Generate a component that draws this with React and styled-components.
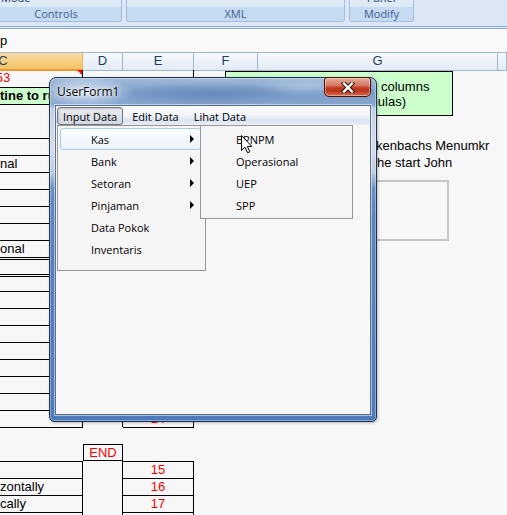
import React from "react";
import styled, { createGlobalStyle } from "styled-components";

const GlobalStyle = createGlobalStyle`
    html, body {
        margin: 0;
        padding: 0;
        background: #f7f7f7;
        overflow: hidden;
    }
`;

const RED = "#ff0000";
const GREEN = "#ccffcc";
const TEMPLATE = "159px 40px 71px 64px 240px 1fr";
const COLS = ["C", "D", "E", "F", "G", "H"];

const Page = styled.div`
    position: relative;
    width: 507px;
    height: 515px;
    overflow: hidden;
    display: flex;
    flex-direction: column;
    background: #f7f7f7;
    font-family: "Liberation Sans", Arial, sans-serif;
`;

/* ---------- ribbon ---------- */

const Ribbon = styled.div`
    display: flex;
    align-items: flex-start;
    gap: 4px;
    height: 26px;
    flex-shrink: 0;
    background: #dbe7f5;
    border-bottom: 3px double #93acd0;
`;

const Group = styled.div`
    display: flex;
    flex-direction: column;
    box-sizing: border-box;
    width: ${(p) => p.$w}px;
    height: 22px;
    margin-left: ${(p) => p.$offset || 0}px;
    border: 1px solid #a5bedf;
    border-top: none;
    border-radius: 0 0 3px 3px;
    background: #dfeaf7;
    overflow: hidden;
`;

const GroupBody = styled.div`
    height: 7px;
    overflow: hidden;
    padding-left: ${(p) => p.$pad || 0}px;
    font-family: "Open Sans", sans-serif;
    font-size: 11px;
    color: #1e395b;
`;

const ClippedText = styled.div`
    line-height: 12px;
    margin-top: -8px;
    white-space: nowrap;
`;

const GroupLabel = styled.div`
    height: 14px;
    line-height: 14px;
    text-align: center;
    background: #c6daf1;
    font-family: "Open Sans", sans-serif;
    font-size: 11px;
    color: #3e5f92;
`;

/* ---------- formula bar + headers ---------- */

const FormulaBar = styled.div`
    height: 23px;
    flex-shrink: 0;
    line-height: 23px;
    font-size: 13px;
    color: #000;
    background: #f9f9f9;
    border-bottom: 1px solid #9fb6d3;
`;

const HeaderRow = styled.div`
    display: grid;
    grid-template-columns: ${TEMPLATE};
    height: 17px;
    flex-shrink: 0;
    margin-left: -76px;
`;

const HeaderCell = styled.div`
    box-sizing: border-box;
    border-right: 1px solid ${(p) => (p.$selected ? "#f2b35c" : "#9eb6ce")};
    border-bottom: ${(p) => (p.$selected ? "2px solid #f29536" : "1px solid #9eb6ce")};
    background: ${(p) =>
        p.$selected
            ? "linear-gradient(#f9dca4, #f3c465)"
            : "linear-gradient(#f6f9fd, #e3ebf6)"};
    text-align: center;
    font-size: 13px;
    line-height: 16px;
    color: #1f3c62;
`;

/* ---------- sheet ---------- */

const SheetGrid = styled.div`
    display: grid;
    grid-template-columns: ${TEMPLATE};
    grid-auto-rows: 17px;
    margin-left: -76px;
`;

const line = (v) => (v === "double" ? "3px double #000" : v ? "1px solid #000" : "none");

const Cell = styled.div`
    position: relative;
    box-sizing: border-box;
    border-top: ${(p) => line(p.$t)};
    border-bottom: ${(p) => line(p.$b)};
    border-left: ${(p) => line(p.$l)};
    border-right: ${(p) => line(p.$r)};
    background: ${(p) => p.$bg || "transparent"};
    color: ${(p) => p.$color || "#000"};
    font-weight: ${(p) => (p.$bold ? 700 : 400)};
    text-align: ${(p) => p.$align || "left"};
    padding-left: ${(p) => p.$pad || 0}px;
    font-size: 13px;
    line-height: 15px;
    white-space: nowrap;

    ${(p) =>
        p.$comment &&
        `&::after {
            content: "";
            position: absolute;
            top: 0;
            right: 0;
            border-top: 5px solid ${RED};
            border-left: 5px solid transparent;
        }`}
`;

const GreenNote = styled.div`
    position: absolute;
    left: 225px;
    top: 71px;
    width: 228px;
    height: 45px;
    box-sizing: border-box;
    border: 1px solid #000;
    background: ${GREEN};
    padding-top: 7px;
    font-size: 13px;
    line-height: 15px;
    white-space: nowrap;
`;

const NoteLine = styled.div`
    padding-left: ${(p) => p.$pad}px;
`;

const GrayShape = styled.div`
    position: absolute;
    left: 370px;
    top: 180px;
    width: 79px;
    height: 61px;
    box-sizing: border-box;
    border: 2px solid #c6c6c6;
`;

/* ---------- user form ---------- */

const Window = styled.div`
    position: absolute;
    left: 49px;
    top: 77px;
    width: 328px;
    height: 345px;
    box-sizing: border-box;
    display: flex;
    flex-direction: column;
    padding: 0 5px 6px;
    border: 1px solid #1f3350;
    border-radius: 7px 7px 5px 5px;
    background: linear-gradient(
        180deg,
        #a2bbdb 0px,
        #7c9dc9 14px,
        #86a5cf 27px,
        #c2d1e4 30px,
        #d3dde9 70px,
        #b9cbe1 95px,
        #6990c6 110px,
        #5783c1 140px,
        #4c7abb 100%
    );
    box-shadow: inset 0 0 0 1px rgba(255, 255, 255, 0.35), 1px 1px 3px rgba(0, 0, 0, 0.25);
`;

const TitleBar = styled.div`
    display: flex;
    justify-content: space-between;
    align-items: flex-start;
    height: 27px;
    flex-shrink: 0;
    margin: 0 -5px;
    padding: 0 5px;
    border-radius: 6px 6px 0 0;
    background:
        radial-gradient(ellipse 50px 16px at 35px 14px, rgba(228, 236, 246, 0.9), rgba(228, 236, 246, 0)),
        radial-gradient(ellipse 90px 12px at 160px 16px, rgba(60, 100, 160, 0.35), rgba(60, 100, 160, 0)),
        radial-gradient(ellipse 50px 10px at 255px 8px, rgba(200, 215, 235, 0.5), rgba(200, 215, 235, 0));
`;

const Title = styled.div`
    align-self: center;
    padding-left: 2px;
    font-family: "Open Sans", sans-serif;
    font-size: 12px;
    color: #000;
    text-shadow: 0 0 6px rgba(255, 255, 255, 0.95), 0 0 2px #fff;
`;

const CloseButton = styled.div`
    display: flex;
    align-items: center;
    justify-content: center;
    box-sizing: border-box;
    width: 47px;
    height: 20px;
    margin-top: -1px;
    border: 1px solid #4a1109;
    border-radius: 3px 3px 5px 5px;
    background: linear-gradient(
        180deg,
        #e9ab9b 0%,
        #d57a66 40%,
        #c0391f 55%,
        #b8351c 72%,
        #d96f50 100%
    );
    box-shadow: inset 0 0 0 1px rgba(255, 255, 255, 0.4);
`;

const Client = styled.div`
    position: relative;
    flex: 1;
    display: flex;
    flex-direction: column;
    border: 1px solid #5b6f8e;
    background: #f7f7f7;
    box-shadow: 0 0 0 1px rgba(255, 255, 255, 0.5);
    font-family: "Open Sans", sans-serif;
    font-size: 11px;
    color: #000;
`;

const MenuBar = styled.div`
    display: flex;
    align-items: flex-start;
    gap: 3px;
    height: 19px;
    box-sizing: border-box;
    padding: 1px 0 0 1px;
    background: linear-gradient(180deg, #fbfcfe 0%, #f3f6fa 45%, #dbe4f1 75%, #e8edf5 100%);
`;

const MenuItem = styled.div`
    display: flex;
    align-items: center;
    box-sizing: border-box;
    height: 18px;
    padding: 0 5px;
    border: 1px solid ${(p) => (p.$active ? "#6c7785" : "transparent")};
    border-radius: 3px;
    background: ${(p) => (p.$active ? "linear-gradient(#e9ecf0, #d3d9e2)" : "transparent")};
    box-shadow: ${(p) => (p.$active ? "inset 1px 1px 2px rgba(0, 0, 0, 0.18)" : "none")};
`;

const Dropdown = styled.div`
    position: absolute;
    left: ${(p) => p.$x}px;
    top: ${(p) => p.$y}px;
    width: ${(p) => p.$w}px;
    height: ${(p) => p.$h}px;
    box-sizing: border-box;
    display: flex;
    flex-direction: column;
    padding-top: 2px;
    border: 1px solid #979797;
    background: #f5f5f5;
`;

const DropItem = styled.div`
    display: flex;
    align-items: center;
    justify-content: space-between;
    box-sizing: border-box;
    height: 22px;
    flex-shrink: 0;
    margin: 0 4px 0 2px;
    padding: 0 6px 0 ${(p) => p.$indent}px;
    border: 1px solid ${(p) => (p.$hot ? "#a8caf0" : "transparent")};
    border-radius: 3px;
    background: ${(p) => (p.$hot ? "linear-gradient(#fbfdff, #ebf3fc)" : "transparent")};
`;

const Caret = styled.span`
    width: 0;
    height: 0;
    border-left: 4px solid #000;
    border-top: 4px solid transparent;
    border-bottom: 4px solid transparent;
`;

const Pointer = styled.svg`
    position: absolute;
    left: 185px;
    top: 29px;
`;

/* ---------- data ---------- */

const rows = [
    { C: { text: "53", color: RED, align: "center", r: 1, comment: true }, E: { r: 1 } },
    { C: { t: 1, text: "tine to ru", bold: true, bg: GREEN, pad: 76 } },
    { C: { t: 1 } },
    {},
    { C: { t: 1 }, G: { text: "kenbachs Menumkr", pad: 118 } },
    { C: { t: 1, text: "nal", pad: 76 }, G: { text: "he start John", pad: 119 } },
    { C: { t: 1 } },
    { C: { t: 1 } },
    { C: { t: 1 } },
    { C: { t: 1 } },
    { C: { t: 1, text: "onal", pad: 76 } },
    { C: { t: "double" } },
    { C: { t: "double" } },
    { C: { t: 1 } },
    { C: { t: 1 } },
    { C: { t: 1 } },
    { C: { t: 1 } },
    { C: { t: 1 } },
    { C: { t: 1 } },
    { C: { t: 1 } },
    { C: { t: 1, r: 1 }, D: { r: 1 }, E: { t: 1, r: 1, text: "14", color: RED, align: "center" } },
    { C: { t: 1 }, E: { t: 1 } },
    { D: { t: 1, b: 1, l: 1, r: 1, text: "END", color: RED, align: "center" } },
    { C: { t: 1, r: 1 }, D: { r: 1 }, E: { t: 1, r: 1, text: "15", color: RED, align: "center" } },
    { C: { t: 1, r: 1, text: "zontally", pad: 76 }, D: { r: 1 }, E: { t: 1, r: 1, text: "16", color: RED, align: "center" } },
    { C: { t: 1, r: 1, text: "cally", pad: 76 }, D: { r: 1 }, E: { t: 1, r: 1, text: "17", color: RED, align: "center" } },
    { C: { t: 1, r: 1 }, D: { r: 1 }, E: { t: 1, r: 1 } },
];

const inputMenu = [
    { label: "Kas", sub: true, hot: true },
    { label: "Bank", sub: true },
    { label: "Setoran", sub: true },
    { label: "Pinjaman", sub: true },
    { label: "Data Pokok" },
    { label: "Inventaris" },
];

const kasMenu = ["BPNPM", "Operasional", "UEP", "SPP"];

function SheetCell({ spec = {} }) {
    return (
        <Cell
            $t={spec.t}
            $b={spec.b}
            $l={spec.l}
            $r={spec.r}
            $bg={spec.bg}
            $color={spec.color}
            $bold={spec.bold}
            $align={spec.align}
            $pad={spec.pad}
            $comment={spec.comment}
        >
            {spec.text}
        </Cell>
    );
}

function CloseGlyph() {
    return (
        <svg width="14" height="11" viewBox="0 0 14 11">
            <path d="M3 1.5 L11 9.5 M11 1.5 L3 9.5" stroke="#3f150d" strokeWidth="4.5" strokeLinecap="square" />
            <path d="M3 1.5 L11 9.5 M11 1.5 L3 9.5" stroke="#fff" strokeWidth="2.4" strokeLinecap="square" />
        </svg>
    );
}

function UserForm() {
    return (
        <Window>
            <TitleBar>
                <Title>UserForm1</Title>
                <CloseButton>
                    <CloseGlyph />
                </CloseButton>
            </TitleBar>
            <Client>
                <MenuBar>
                    <MenuItem $active>Input Data</MenuItem>
                    <MenuItem>Edit Data</MenuItem>
                    <MenuItem>Lihat Data</MenuItem>
                </MenuBar>
                <Dropdown $x={1} $y={19} $w={149} $h={146}>
                    {inputMenu.map((item) => (
                        <DropItem key={item.label} $indent={30} $hot={item.hot}>
                            <span>{item.label}</span>
                            {item.sub && <Caret />}
                        </DropItem>
                    ))}
                </Dropdown>
                <Dropdown $x={144} $y={19} $w={153} $h={94}>
                    {kasMenu.map((label) => (
                        <DropItem key={label} $indent={32}>
                            <span>{label}</span>
                        </DropItem>
                    ))}
                </Dropdown>
                <Pointer width="12" height="19" viewBox="0 0 12 19">
                    <path
                        d="M0.5 0.5 L0.5 15.5 L4 12.2 L6.6 17.8 L8.8 16.8 L6.3 11.4 L10.8 11.4 Z"
                        fill="#fff"
                        stroke="#000"
                        strokeWidth="1"
                        strokeLinejoin="round"
                    />
                </Pointer>
            </Client>
        </Window>
    );
}

export default function App() {
    return (
        <Page>
            <GlobalStyle />
            <Ribbon>
                <Group $w={132} $offset={-10}>
                    <GroupBody $pad={10}>
                        <ClippedText>Mode</ClippedText>
                    </GroupBody>
                    <GroupLabel>Controls</GroupLabel>
                </Group>
                <Group $w={219}>
                    <GroupBody />
                    <GroupLabel>XML</GroupLabel>
                </Group>
                <Group $w={65}>
                    <GroupBody $pad={17}>
                        <ClippedText>Panel</ClippedText>
                    </GroupBody>
                    <GroupLabel>Modify</GroupLabel>
                </Group>
            </Ribbon>
            <FormulaBar>p</FormulaBar>
            <HeaderRow>
                {COLS.map((c) => (
                    <HeaderCell key={c} $selected={c === "C"}>
                        {c === "H" ? "" : c}
                    </HeaderCell>
                ))}
            </HeaderRow>
            <SheetGrid>
                {rows.map((row, i) =>
                    COLS.map((c) => <SheetCell key={`${i}-${c}`} spec={row[c]} />)
                )}
            </SheetGrid>
            <GreenNote>
                <NoteLine $pad={155}>columns</NoteLine>
                <NoteLine $pad={141}>mulas)</NoteLine>
            </GreenNote>
            <GrayShape />
            <UserForm />
        </Page>
    );
}
